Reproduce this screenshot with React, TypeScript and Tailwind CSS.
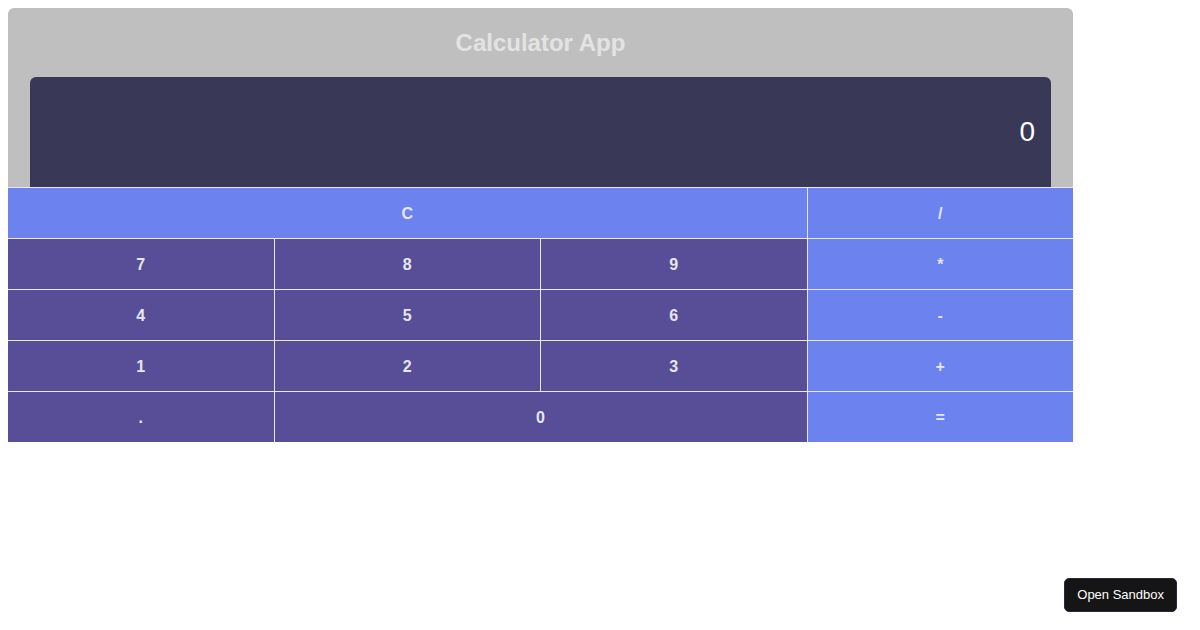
import React, { useState } from 'react';

const keys: { label: string; span?: string; op?: boolean }[] = [
    { label: 'C', span: 'col-span-3', op: true },
    { label: '/', op: true },
    { label: '7' },
    { label: '8' },
    { label: '9' },
    { label: '*', op: true },
    { label: '4' },
    { label: '5' },
    { label: '6' },
    { label: '-', op: true },
    { label: '1' },
    { label: '2' },
    { label: '3' },
    { label: '+', op: true },
    { label: '.' },
    { label: '0', span: 'col-span-2' },
    { label: '=', op: true },
];

const App: React.FC = () => {
    const [display, setDisplay] = useState('0');

    // Basic handling so the keys do something
    const handleKey = (k: string) => {
        if (k === 'C') return setDisplay('0');
        if (k === '=') {
            try {
                // eslint-disable-next-line no-new-func
                setDisplay(String(Function(`return (${display})`)()));
            } catch {
                setDisplay('Error');
            }
            return;
        }
        setDisplay(display === '0' && k !== '.' ? k : display + k);
    };

    return (
        <div className="min-h-[630px] bg-white p-2 font-['Liberation_Sans',Arial,sans-serif]">
            <div className="w-[1065px] bg-[#bfbfbf] rounded-t-md">
                <h1 className="pt-[21px] pb-5 text-center text-2xl leading-7 font-bold text-[#e3e3e3]">
                    Calculator App
                </h1>
                <div className="mx-[22px] h-[110px] bg-[#393857] rounded-t-md flex items-center justify-end pr-4">
                    <span className="text-[28px] text-white">{display}</span>
                </div>
                <div className="grid grid-cols-4 gap-px bg-[#e8e8f0] pt-px">
                    {keys.map((k) => (
                        <button
                            key={k.label}
                            onClick={() => handleKey(k.label)}
                            className={`${k.span ?? ''} h-[50px] pt-[2px] text-base font-bold text-[#e6e6ef] ${
                                k.op ? 'bg-[#6b82ef]' : 'bg-[#584d97]'
                            }`}
                        >
                            {k.label}
                        </button>
                    ))}
                </div>
            </div>

            <button className="fixed right-[23px] bottom-[18px] h-[34px] px-3 rounded-[5px] bg-[#151515] border border-[#2a2740] text-[13px] text-white">
                Open Sandbox
            </button>
        </div>
    );
};

export default App;
